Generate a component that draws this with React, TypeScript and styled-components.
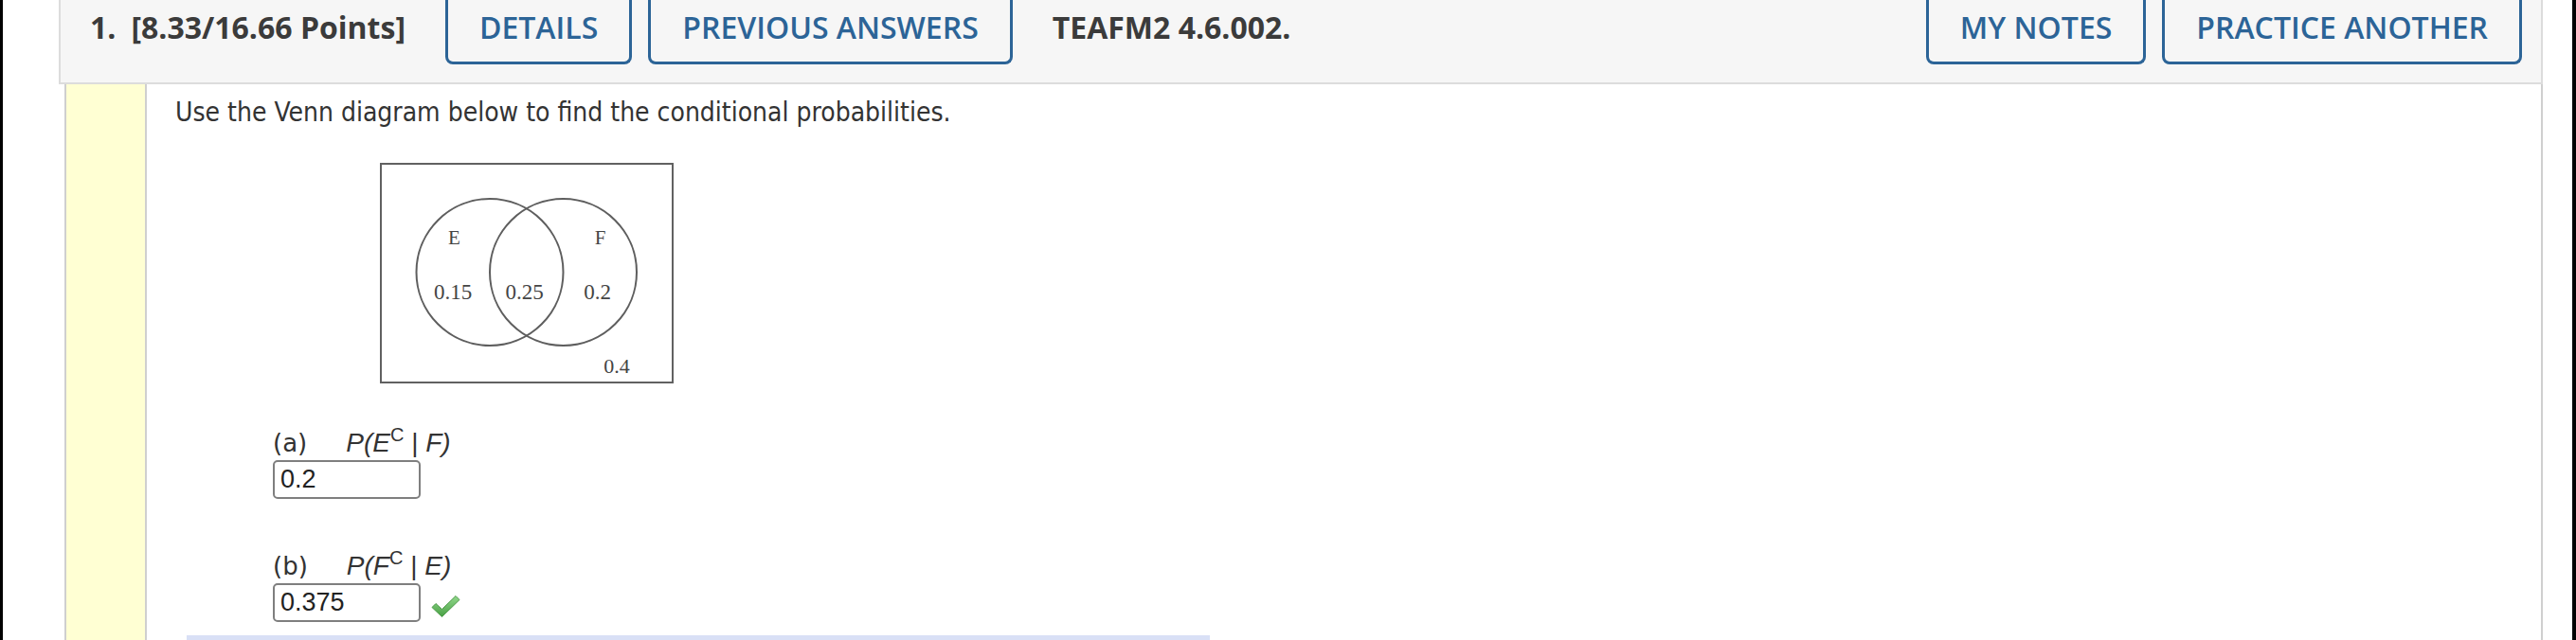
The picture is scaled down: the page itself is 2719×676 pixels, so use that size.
import React from "react";
import styled, { createGlobalStyle } from "styled-components";

const Global = createGlobalStyle`
  html, body { margin: 0; padding: 0; background: #fff; overflow: hidden; }
  #root { width: 2719px; height: 676px; }
`;

const Frame = styled.div`
  box-sizing: border-box;
  width: 2719px;
  height: 676px;
  overflow: hidden;
  border-left: 3px solid #000;
  border-right: 4px solid #000;
  padding-left: 59px;
  padding-right: 31px;
  background: #fff;
`;

const Header = styled.div`
  box-sizing: border-box;
  height: 89px;
  display: flex;
  align-items: flex-start;
  background: #f6f6f6;
  border: 2px solid #dcdcdc;
  border-top: none;
  padding: 0 20px 0 31px;
`;

const HeaderText = styled.div<{ $gap?: number; $spacing?: number }>`
  box-sizing: border-box;
  height: 68px;
  display: flex;
  align-items: center;
  padding-bottom: 11px;
  margin-left: ${(p) => p.$gap ?? 0}px;
  letter-spacing: ${(p) => p.$spacing ?? 0}px;
  font-family: "Open Sans", sans-serif;
  font-weight: 700;
  font-size: 32px;
  color: #3b3b3b;
  white-space: nowrap;
`;

const Num = styled.span`
  margin-right: 16px;
`;

const HeaderButton = styled.button<{ $gap?: number; $push?: boolean }>`
  box-sizing: border-box;
  height: 68px;
  display: flex;
  align-items: center;
  padding: 0 33px 8px;
  margin-left: ${(p) => (p.$push ? "auto" : `${p.$gap ?? 17}px`)};
  background: transparent;
  border: 3px solid #2c6497;
  border-top: none;
  border-radius: 0 0 8px 8px;
  color: #2c6497;
  font-family: "Open Sans", sans-serif;
  font-weight: 600;
  font-size: 32px;
  white-space: nowrap;
  cursor: pointer;
`;

const Body = styled.div`
  display: flex;
  height: 587px;
  margin-left: 6px;
  border-right: 2px solid #cfcfcf;
`;

const Gutter = styled.div`
  flex: none;
  width: 83px;
  background: #ffffd3;
  border-left: 2px solid #cfcfcf;
  border-right: 2px solid #cfcfcf;
`;

const Main = styled.div`
  flex: 1;
  padding: 14px 0 0 30px;
`;

const Question = styled.p`
  margin: 0;
  font-family: "DejaVu Sans Condensed", "DejaVu Sans", Verdana, sans-serif;
  font-stretch: condensed;
  font-size: 28px;
  line-height: 32px;
  color: #333;
`;

const VennWrap = styled.div`
  margin: 37px 0 0 216px;
  width: 311px;
  height: 234px;
`;

const Part = styled.div<{ $top: number }>`
  margin: ${(p) => p.$top}px 0 0 103px;
`;

const PartLabel = styled.div`
  display: flex;
  align-items: baseline;
  height: 30px;
  line-height: 30px;
  color: #333;
`;

const Letter = styled.span`
  font-family: "DejaVu Sans", Verdana, sans-serif;
  font-size: 26px;
`;

const Expr = styled.span`
  margin-left: 41px;
  font-family: "Liberation Sans", Arial, sans-serif;
  font-style: italic;
  font-size: 28px;
`;

const Sup = styled.sup`
  font-size: 20px;
  font-style: normal;
  vertical-align: 11px;
  line-height: 0;
`;

const Bar = styled.span`
  font-style: normal;
`;

const AnswerRow = styled.div`
  display: flex;
  align-items: center;
  margin-top: 3px;
  gap: 11px;
`;

const Answer = styled.div`
  box-sizing: border-box;
  width: 156px;
  height: 41px;
  border: 2px solid #7f7f7f;
  border-radius: 5px;
  padding: 0 6px;
  display: flex;
  align-items: center;
  font-family: "Liberation Sans", Arial, sans-serif;
  font-size: 27px;
  color: #222;
  background: #fff;
`;

const Check = styled.svg`
  margin-top: 8px;
`;

const NextBox = styled.div`
  margin: 14px 0 0 12px;
  width: 1080px;
  height: 20px;
  background: #d9e0f6;
`;

const Venn = () => (
  <svg width="311" height="234" viewBox="0 0 311 234">
    <rect x="1" y="1" width="308" height="231" fill="#fff" stroke="#616161" strokeWidth="2" />
    <circle cx="116" cy="115.5" r="77.5" fill="none" stroke="#5e5e5e" strokeWidth="2" />
    <circle cx="193.5" cy="115.5" r="77.5" fill="none" stroke="#5e5e5e" strokeWidth="2" />
    <g fontFamily="'Liberation Serif', 'Times New Roman', serif" fontSize="21" fill="#444" textAnchor="middle">
      <text x="78.5" y="86">E</text>
      <text x="232.5" y="86">F</text>
      <text x="77" y="144" fontSize="23">0.15</text>
      <text x="152.5" y="144" fontSize="23">0.25</text>
      <text x="229.5" y="144" fontSize="23">0.2</text>
      <text x="250" y="222" fontSize="22">0.4</text>
    </g>
  </svg>
);

const CheckMark = () => (
  <Check width="31" height="25" viewBox="0 0 31 25">
    <defs>
      <linearGradient id="ck" x1="0" y1="0" x2="0" y2="1">
        <stop offset="0" stopColor="#92d88c" />
        <stop offset="1" stopColor="#48a044" />
      </linearGradient>
    </defs>
    <path
      d="M1 13.5 L5 9.5 L11.5 15.5 L26 1.5 L30 5.5 L11.5 23.5 Z"
      fill="url(#ck)"
      stroke="#4c9a48"
      strokeWidth="1"
      strokeLinejoin="round"
    />
  </Check>
);

export default function App() {
  return (
    <>
      <Global />
      <Frame>
        <Header>
          <HeaderText>
            <Num>1.</Num>[8.33/16.66 Points]
          </HeaderText>
          <HeaderButton $gap={42}>DETAILS</HeaderButton>
          <HeaderButton>PREVIOUS ANSWERS</HeaderButton>
          <HeaderText $gap={42}>TEAFM2 4.6.002.</HeaderText>
          <HeaderButton $push>MY NOTES</HeaderButton>
          <HeaderButton>PRACTICE ANOTHER</HeaderButton>
        </Header>
        <Body>
          <Gutter />
          <Main>
            <Question>Use the Venn diagram below to find the conditional probabilities.</Question>
            <VennWrap>
              <Venn />
            </VennWrap>
            <Part $top={47}>
              <PartLabel>
                <Letter>(a)</Letter>
                <Expr>
                  P(E<Sup>C</Sup> <Bar>|</Bar> F)
                </Expr>
              </PartLabel>
              <AnswerRow>
                <Answer>0.2</Answer>
              </AnswerRow>
            </Part>
            <Part $top={56}>
              <PartLabel>
                <Letter>(b)</Letter>
                <Expr>
                  P(F<Sup>C</Sup> <Bar>|</Bar> E)
                </Expr>
              </PartLabel>
              <AnswerRow>
                <Answer>0.375</Answer>
                <CheckMark />
              </AnswerRow>
            </Part>
            <NextBox />
          </Main>
        </Body>
      </Frame>
    </>
  );
}
